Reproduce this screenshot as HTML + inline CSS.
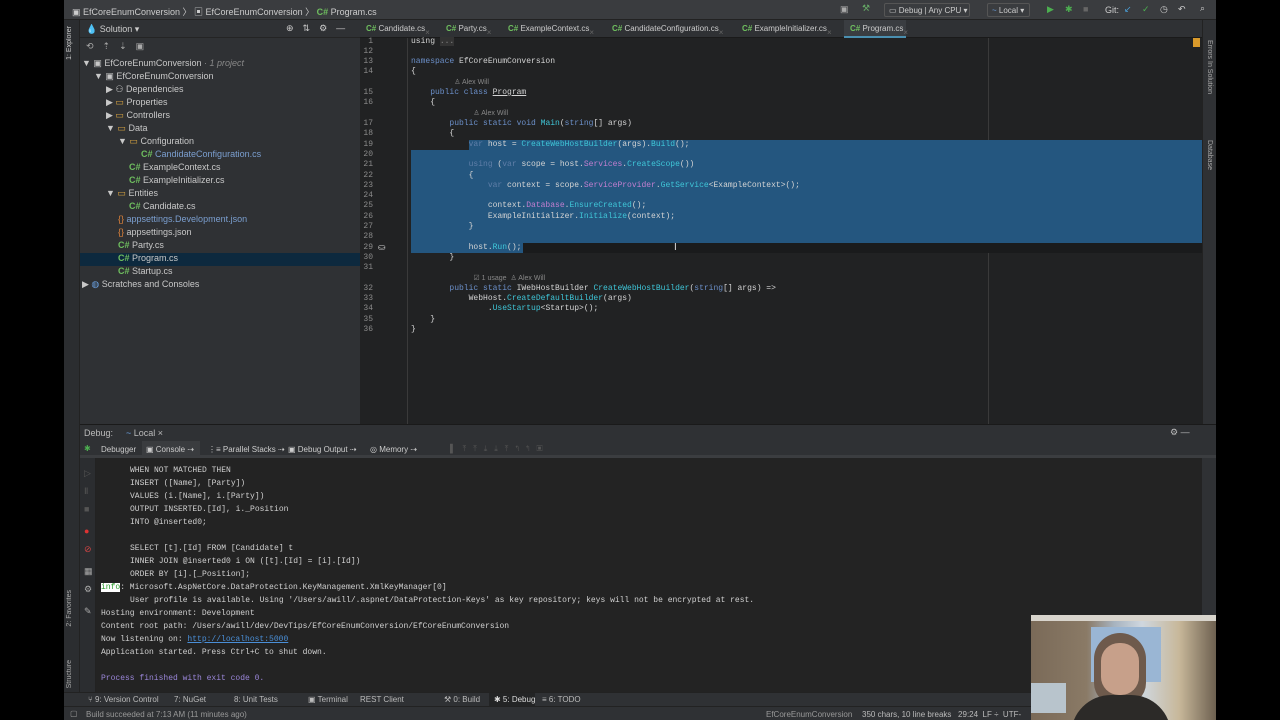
<!DOCTYPE html>
<html><head><meta charset="utf-8"><style>
*{margin:0;padding:0;box-sizing:border-box}
body{width:1280px;height:720px;background:#000;position:relative;overflow:hidden;font-family:"Liberation Sans",sans-serif;color:#bbb;white-space:nowrap}
.a{position:absolute}
.ide{left:64px;top:0;width:1152px;height:720px;background:#2b2d30}
.mono{font-family:"Liberation Mono",monospace}
.tb{left:64px;top:0;width:1152px;height:20px;background:#3a3c3f;border-bottom:1px solid #222;font-size:9px;color:#ccc}
.side{left:80px;top:20px;width:280px;height:404px;background:#2f3134}
.strip{left:64px;top:20px;width:16px;height:672px;background:#2b2d30;border-right:1px solid #222}
.tree div{position:absolute;font-size:9px;color:#c8c8c8;white-space:nowrap;height:13px;line-height:13px}
.ed{left:360px;top:38px;width:842px;height:386px;background:#212223}
.tabs{left:360px;top:20px;width:842px;height:18px;background:#2f3134;border-bottom:1px solid #1a1a1a;font-size:8px;color:#ccc}
.tabs span{position:absolute;top:4px;white-space:nowrap}
.cs{color:#6fbf5f;font-weight:bold}
.tabs span .cs{position:static}
.code div{position:absolute;left:411px;font-size:8px;line-height:10px;color:#d4d4d4;white-space:pre}
.ln div{position:absolute;left:360px;width:13px;text-align:right;font-size:8px;line-height:10px;color:#8a8a8a}
.k{color:#6b8fc8}.kd{color:#5f7ea8}.m{color:#3fc6d8}.p{color:#c27fd0}
.an{font-family:"Liberation Sans",sans-serif;font-size:7px;color:#888}
.con div{position:absolute;font-size:8px;line-height:13px;color:#d0d0d0;white-space:pre}
</style></head><body>
<div class="a ide"></div>
<div class="a tb">
 <span class="a" style="left:8px;top:5px">▣ EfCoreEnumConversion 〉 ▣ EfCoreEnumConversion 〉 <span class="cs">C#</span> Program.cs</span>
 <span class="a" style="left:776px;top:4px;color:#aaa">▣</span>
 <span class="a" style="left:798px;top:3px;color:#6a6">⚒</span>
 <span class="a" style="left:820px;top:3px;width:86px;height:14px;border:1px solid #555;border-radius:2px;padding:2px 4px;font-size:8px">▭ Debug | Any CPU ▾</span>
 <span class="a" style="left:923px;top:3px;width:43px;height:14px;border:1px solid #555;border-radius:2px;padding:2px 4px;font-size:8px"><span style="color:#6aa0e0">~</span> Local ▾</span>
 <span class="a" style="left:983px;top:4px;color:#4caf50">▶</span>
 <span class="a" style="left:1001px;top:4px;color:#4caf50">✱</span>
 <span class="a" style="left:1019px;top:4px;color:#666">■</span>
 <span class="a" style="left:1041px;top:5px">Git:</span>
 <span class="a" style="left:1060px;top:4px;color:#4a9fd8">↙</span>
 <span class="a" style="left:1078px;top:4px;color:#4caf50">✓</span>
 <span class="a" style="left:1096px;top:4px">◷</span>
 <span class="a" style="left:1114px;top:4px">↶</span>
 <span class="a" style="left:1136px;top:3px">⌕</span>
</div>
<div class="a strip"><span class="a" style="left:2px;top:6px;font-size:7px;color:#ccc;writing-mode:vertical-rl;transform:rotate(180deg)">1: Explorer</span>
<span class="a" style="left:2px;top:570px;font-size:7px;color:#aaa;writing-mode:vertical-rl;transform:rotate(180deg)">2: Favorites</span>
<span class="a" style="left:2px;top:640px;font-size:7px;color:#aaa;writing-mode:vertical-rl;transform:rotate(180deg)">Structure</span></div>
<div class="a side"></div>
<div class="a" style="left:80px;top:20px;width:280px;height:18px;border-bottom:1px solid #242424;font-size:9px;color:#ccc"><span class="a" style="left:6px;top:4px">💧 Solution ▾</span><span class="a" style="left:206px;top:3px;letter-spacing:9px">⊕⇅⚙—</span></div>
<div class="a" style="left:80px;top:38px;width:280px;height:18px;font-size:9px;color:#aaa"><span class="a" style="left:6px;top:3px;letter-spacing:9px">⟲⇡⇣▣</span></div>
<div class="a" style="left:80px;top:253px;width:280px;height:13px;background:#0d293e"></div>
<div class="tree">
<div style="left:82px;top:57px">▼ ▣ EfCoreEnumConversion <span style="color:#888;font-style:italic">· 1 project</span></div>
<div style="left:94px;top:70px">▼ ▣ EfCoreEnumConversion</div>
<div style="left:106px;top:83px">▶ ⚇ Dependencies</div>
<div style="left:106px;top:96px">▶ <span style="color:#d9a441">▭</span> Properties</div>
<div style="left:106px;top:109px">▶ <span style="color:#d9a441">▭</span> Controllers</div>
<div style="left:106px;top:122px">▼ <span style="color:#d9a441">▭</span> Data</div>
<div style="left:118px;top:135px">▼ <span style="color:#d9a441">▭</span> Configuration</div>
<div style="left:141px;top:148px;color:#7b9fd0"><span class="cs">C#</span> CandidateConfiguration.cs</div>
<div style="left:129px;top:161px"><span class="cs">C#</span> ExampleContext.cs</div>
<div style="left:129px;top:174px"><span class="cs">C#</span> ExampleInitializer.cs</div>
<div style="left:106px;top:187px">▼ <span style="color:#d9a441">▭</span> Entities</div>
<div style="left:129px;top:200px"><span class="cs">C#</span> Candidate.cs</div>
<div style="left:118px;top:213px;color:#7b9fd0"><span style="color:#d9803a">{}</span> appsettings.Development.json</div>
<div style="left:118px;top:226px"><span style="color:#d9803a">{}</span> appsettings.json</div>
<div style="left:118px;top:239px"><span class="cs">C#</span> Party.cs</div>
<div style="left:118px;top:252px"><span class="cs">C#</span> Program.cs</div>
<div style="left:118px;top:265px"><span class="cs">C#</span> Startup.cs</div>
<div style="left:82px;top:278px">▶ <span style="color:#6aa0e0">◍</span> Scratches and Consoles</div>
</div>
<div class="a tabs">
<div class="a" style="left:484px;top:0;width:62px;height:18px;background:#3a3d41;border-bottom:2px solid #4a8fb0"></div>
<span style="left:6px"><span class="cs">C#</span> Candidate.cs <span style="color:#666">×</span></span>
<span style="left:86px"><span class="cs">C#</span> Party.cs <span style="color:#666">×</span></span>
<span style="left:148px"><span class="cs">C#</span> ExampleContext.cs <span style="color:#666">×</span></span>
<span style="left:252px"><span class="cs">C#</span> CandidateConfiguration.cs <span style="color:#666">×</span></span>
<span style="left:382px"><span class="cs">C#</span> ExampleInitializer.cs <span style="color:#666">×</span></span>
<span style="left:490px"><span class="cs">C#</span> Program.cs <span style="color:#666">×</span></span>
</div>
<div class="a ed"></div>
<div class="a" style="left:407px;top:38px;width:1px;height:386px;background:#3a3a3a"></div>
<div class="a" style="left:988px;top:38px;width:1px;height:386px;background:#3a3a3a"></div>
<div class="a" style="left:1202px;top:20px;width:14px;height:404px;background:#2f3134;border-left:1px solid #222"><span class="a" style="left:3px;top:20px;font-size:7px;color:#aaa;writing-mode:vertical-rl">Errors In Solution</span><span class="a" style="left:3px;top:120px;font-size:7px;color:#aaa;writing-mode:vertical-rl">Database</span></div>
<div class="a" style="left:1193px;top:38px;width:7px;height:9px;background:#d99a2b"></div>
<div class="a" style="left:411px;top:242px;width:791px;height:11px;background:#1a1b1c"></div>
<div class="a" style="left:469px;top:140px;width:733px;height:11px;background:#24567f"></div>
<div class="a" style="left:411px;top:150px;width:791px;height:93px;background:#24567f"></div>
<div class="a" style="left:411px;top:242px;width:112px;height:11px;background:#24567f"></div>
<div class="ln mono">
<div style="top:37px">1</div><div style="top:47px">12</div><div style="top:57px">13</div><div style="top:67px">14</div><div style="top:88px">15</div><div style="top:98px">16</div><div style="top:119px">17</div><div style="top:129px">18</div><div style="top:140px">19</div><div style="top:150px">20</div><div style="top:160px">21</div><div style="top:171px">22</div><div style="top:181px">23</div><div style="top:191px">24</div><div style="top:201px">25</div><div style="top:212px">26</div><div style="top:222px">27</div><div style="top:232px">28</div><div style="top:243px">29</div><div style="top:253px">30</div><div style="top:263px">31</div><div style="top:284px">32</div><div style="top:294px">33</div><div style="top:304px">34</div><div style="top:315px">35</div><div style="top:325px">36</div>
</div>
<div class="code mono">
<div style="top:37px">using <span style="color:#888;background:#333">...</span></div>
<div style="top:57px"><span class="k">namespace</span> EfCoreEnumConversion</div>
<div style="top:67px">{</div>
<div style="top:78px">         <span class="an">♙ Alex Will</span></div>
<div style="top:88px">    <span class="k">public class</span> <u>Program</u></div>
<div style="top:98px">    {</div>
<div style="top:109px">             <span class="an">♙ Alex Will</span></div>
<div style="top:119px">        <span class="k">public static void</span> <span class="m">Main</span>(<span class="k">string</span>[] args)</div>
<div style="top:129px">        {</div>
<div style="top:140px">            <span class="kd">var</span> host = <span class="m">CreateWebHostBuilder</span>(args).<span class="m">Build</span>();</div>
<div style="top:160px">            <span class="kd">using</span> (<span class="kd">var</span> scope = host.<span class="p">Services</span>.<span class="m">CreateScope</span>())</div>
<div style="top:171px">            {</div>
<div style="top:181px">                <span class="kd">var</span> context = scope.<span class="p">ServiceProvider</span>.<span class="m">GetService</span>&lt;ExampleContext&gt;();</div>
<div style="top:201px">                context.<span class="p">Database</span>.<span class="m">EnsureCreated</span>();</div>
<div style="top:212px">                ExampleInitializer.<span class="m">Initialize</span>(context);</div>
<div style="top:222px">            }</div>
<div style="top:243px">            host.<span class="m">Run</span>();</div>
<div style="top:253px">        }</div>
<div style="top:274px">             <span class="an">☑ 1 usage  ♙ Alex Will</span></div>
<div style="top:284px">        <span class="k">public static</span> IWebHostBuilder <span class="m">CreateWebHostBuilder</span>(<span class="k">string</span>[] args) =&gt;</div>
<div style="top:294px">            WebHost.<span class="m">CreateDefaultBuilder</span>(args)</div>
<div style="top:304px">                .<span class="m">UseStartup</span>&lt;Startup&gt;();</div>
<div style="top:315px">    }</div>
<div style="top:325px">}</div>
</div>
<div class="a" style="left:378px;top:242px;font-size:9px;color:#ccc">⛀</div>
<div class="a" style="left:674px;top:242px;font-size:10px;color:#ddd">I</div>
<!-- debug -->
<div class="a" style="left:80px;top:424px;width:1136px;height:16px;background:#2f3134;border-top:1px solid #1a1a1a;font-size:9px;color:#bbb"><span class="a" style="left:4px;top:3px">Debug:</span><span class="a" style="left:46px;top:3px"><span style="color:#6aa0e0">~</span> Local ×</span><span class="a" style="left:1090px;top:2px">⚙ —</span></div>
<div class="a" style="left:80px;top:440px;width:1136px;height:18px;background:#2f3134;border-bottom:3px solid #3b3d40;font-size:8px;color:#ccc">
<span class="a" style="left:4px;top:4px;color:#4caf50">✱</span>
<span class="a" style="left:21px;top:5px">Debugger</span>
<span class="a" style="left:62px;top:1px;width:58px;height:15px;background:#3a3c3f"></span>
<span class="a" style="left:66px;top:5px">▣ Console ⇢</span>
<span class="a" style="left:128px;top:5px">⋮≡ Parallel Stacks ⇢</span>
<span class="a" style="left:208px;top:5px">▣ Debug Output ⇢</span>
<span class="a" style="left:290px;top:5px">◎ Memory ⇢</span>
<span class="a" style="left:370px;top:4px;color:#555;letter-spacing:7px">▌⤒⤒⤓⤓⤒↰↰▣</span>
</div>
<div class="a" style="left:80px;top:458px;width:16px;height:234px;background:#2b2d30;border-right:1px solid #222;font-size:9px">
<span class="a" style="left:4px;top:10px;color:#555">▷</span><span class="a" style="left:4px;top:28px;color:#555">Ⅱ</span><span class="a" style="left:4px;top:46px;color:#555">■</span><span class="a" style="left:4px;top:68px;color:#d33">●</span><span class="a" style="left:4px;top:86px;color:#c44">⊘</span><span class="a" style="left:4px;top:108px;color:#aaa">▦</span><span class="a" style="left:4px;top:126px;color:#aaa">⚙</span><span class="a" style="left:4px;top:148px;color:#aaa">✎</span></div>
<div class="a" style="left:96px;top:458px;width:1106px;height:234px;background:#232323"></div>
<div class="a" style="left:1202px;top:458px;width:14px;height:234px;background:#2f3134"></div>
<div class="con mono">
<div style="left:130px;top:464px">WHEN NOT MATCHED THEN</div>
<div style="left:130px;top:477px">INSERT ([Name], [Party])</div>
<div style="left:130px;top:490px">VALUES (i.[Name], i.[Party])</div>
<div style="left:130px;top:503px">OUTPUT INSERTED.[Id], i._Position</div>
<div style="left:130px;top:516px">INTO @inserted0;</div>
<div style="left:130px;top:542px">SELECT [t].[Id] FROM [Candidate] t</div>
<div style="left:130px;top:555px">INNER JOIN @inserted0 i ON ([t].[Id] = [i].[Id])</div>
<div style="left:130px;top:568px">ORDER BY [i].[_Position];</div>
<div style="left:101px;top:581px"><span style="background:#fff;color:#2a9a2a">info</span>: Microsoft.AspNetCore.DataProtection.KeyManagement.XmlKeyManager[0]</div>
<div style="left:130px;top:594px">User profile is available. Using '/Users/awill/.aspnet/DataProtection-Keys' as key repository; keys will not be encrypted at rest.</div>
<div style="left:101px;top:607px">Hosting environment: Development</div>
<div style="left:101px;top:620px">Content root path: /Users/awill/dev/DevTips/EfCoreEnumConversion/EfCoreEnumConversion</div>
<div style="left:101px;top:633px">Now listening on: <u style="color:#4a8fd8">http://localhost:5000</u></div>
<div style="left:101px;top:646px">Application started. Press Ctrl+C to shut down.</div>
<div style="left:101px;top:672px;color:#9a86d8">Process finished with exit code 0.</div>
</div>
<div class="a" style="left:64px;top:692px;width:1152px;height:14px;background:#2f3134;border-top:1px solid #222;font-size:8px;color:#bbb">
<span class="a" style="left:24px;top:2px">⑂ 9: Version Control</span>
<span class="a" style="left:110px;top:2px">7: NuGet</span>
<span class="a" style="left:170px;top:2px">8: Unit Tests</span>
<span class="a" style="left:244px;top:2px">▣ Terminal</span>
<span class="a" style="left:296px;top:2px">REST Client</span>
<span class="a" style="left:380px;top:2px">⚒ 0: Build</span>
<span class="a" style="left:425px;top:0;width:46px;height:14px;background:#232425"></span>
<span class="a" style="left:430px;top:2px;color:#ddd">✱ 5: Debug</span>
<span class="a" style="left:478px;top:2px">≡ 6: TODO</span>
</div>
<div class="a" style="left:64px;top:706px;width:1152px;height:14px;background:#2f3134;border-top:1px solid #222;font-size:8px;color:#999">
<span class="a" style="left:6px;top:2px">▢</span><span class="a" style="left:22px;top:3px">Build succeeded at 7:13 AM (11 minutes ago)</span>
<span class="a" style="left:702px;top:3px">EfCoreEnumConversion</span><span class="a" style="left:798px;top:3px;color:#bbb">350 chars, 10 line breaks&nbsp;&nbsp;&nbsp;29:24&nbsp;&nbsp;LF ÷&nbsp;&nbsp;UTF-</span>
</div>
<!-- webcam -->
<div class="a" style="left:1031px;top:615px;width:185px;height:105px;background:linear-gradient(90deg,#7a6a58 0%,#8a7a66 30%,#a7b3bf 45%,#cfd7df 60%,#c8b89a 80%,#6d6050 100%);overflow:hidden">
<div class="a" style="left:60px;top:12px;width:70px;height:55px;background:#9ab6d4"></div>
<div class="a" style="left:0;top:0;width:185px;height:6px;background:#d8d4cc"></div>
<div class="a" style="left:63px;top:18px;width:52px;height:72px;border-radius:26px 26px 22px 22px;background:#6e5a4c"></div>
<div class="a" style="left:70px;top:28px;width:38px;height:52px;border-radius:18px;background:#c7a08a"></div>
<div class="a" style="left:40px;top:80px;width:100px;height:40px;border-radius:40px 40px 0 0;background:#2c2a28"></div>
<div class="a" style="left:0;top:68px;width:35px;height:30px;background:#b8c4cc"></div>
</div>
</body></html>
